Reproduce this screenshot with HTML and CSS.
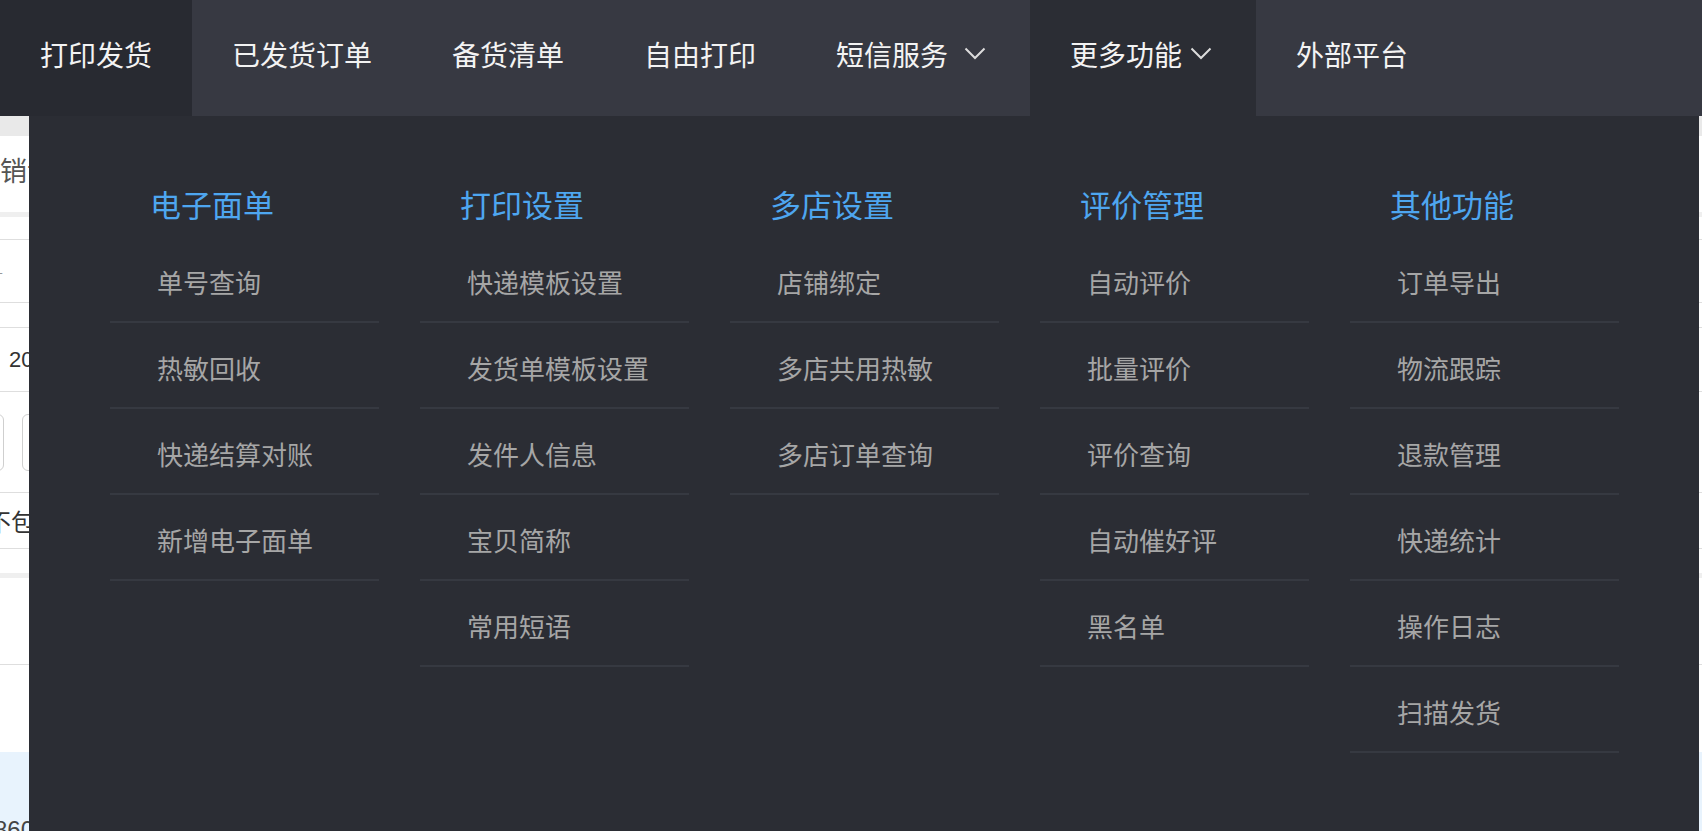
FILE: index.html
```html
<!DOCTYPE html>
<html lang="zh-CN">
<head>
<meta charset="utf-8">
<title>打印发货</title>
<link rel="stylesheet" href="styles.css">
</head>
<body>
<div class="app">
  <nav class="topnav">
    <a class="nav-item active">打印发货</a>
    <a class="nav-item">已发货订单</a>
    <a class="nav-item">备货清单</a>
    <a class="nav-item">自由打印</a>
    <a class="nav-item has-caret caret-wide">短信服务<svg class="caret" viewBox="0 0 22 13" width="22" height="13"><polyline points="1.5,1.5 11,11 20.5,1.5"/></svg></a>
    <a class="nav-item has-caret hover">更多功能<svg class="caret" viewBox="0 0 22 13" width="22" height="13"><polyline points="1.5,1.5 11,11 20.5,1.5"/></svg></a>
    <a class="nav-item">外部平台</a>
  </nav>

  <main class="page">
    <div class="band band-top"></div>
    <div class="row row-title"><span class="title-text">撤销订单</span></div>
    <div class="band band-thin"></div>
    <div class="row r23"></div>
    <div class="row r62"><span class="dash">-</span></div>
    <div class="row r24"></div>
    <div class="row r63"><span class="date">2017-06-01</span></div>
    <div class="row r100">
      <span class="box box-a"></span>
      <span class="box box-b"></span>
    </div>
    <div class="row r55"><span class="opt">不包邮</span></div>
    <div class="gap g24"></div>
    <div class="band band-thin"></div>
    <div class="row r86"></div>
    <div class="gap g87"></div>
    <div class="blue"><span class="num">860</span></div>
  </main>

  <div class="dropdown">
    <div class="menu-col">
      <h3 class="menu-head">电子面单</h3>
      <ul class="menu-list">
        <li>单号查询</li>
        <li>热敏回收</li>
        <li>快递结算对账</li>
        <li>新增电子面单</li>
      </ul>
    </div>
    <div class="menu-col">
      <h3 class="menu-head">打印设置</h3>
      <ul class="menu-list">
        <li>快递模板设置</li>
        <li>发货单模板设置</li>
        <li>发件人信息</li>
        <li>宝贝简称</li>
        <li>常用短语</li>
      </ul>
    </div>
    <div class="menu-col">
      <h3 class="menu-head">多店设置</h3>
      <ul class="menu-list">
        <li>店铺绑定</li>
        <li>多店共用热敏</li>
        <li>多店订单查询</li>
      </ul>
    </div>
    <div class="menu-col">
      <h3 class="menu-head">评价管理</h3>
      <ul class="menu-list">
        <li>自动评价</li>
        <li>批量评价</li>
        <li>评价查询</li>
        <li>自动催好评</li>
        <li>黑名单</li>
      </ul>
    </div>
    <div class="menu-col">
      <h3 class="menu-head">其他功能</h3>
      <ul class="menu-list">
        <li>订单导出</li>
        <li>物流跟踪</li>
        <li>退款管理</li>
        <li>快递统计</li>
        <li>操作日志</li>
        <li>扫描发货</li>
      </ul>
    </div>
  </div>
</div>
</body>
</html>
```

FILE: styles.css
```css
* { box-sizing: border-box; }
html, body {
  margin: 0;
  padding: 0;
  width: 1702px;
  height: 831px;
  overflow: hidden;
  background: #ffffff;
  font-family: "Noto Sans CJK SC", "Liberation Sans", sans-serif;
}
.app {
  position: relative;
  width: 1702px;
  height: 831px;
  overflow: hidden;
}

/* ---------- top nav ---------- */
.topnav {
  display: flex;
  height: 116px;
  background: #373942;
}
.nav-item {
  display: flex;
  align-items: center;
  padding: 0 40px 8px 40px;
  font-size: 28px;
  line-height: 1;
  color: #f3f3f3;
  white-space: nowrap;
}
.nav-item.active { background: #282a31; }
.nav-item.hover { background: #2b2d34; }
.nav-item.has-caret { padding-right: 44px; }
.caret {
  margin-left: 8px;
  margin-top: -2px;
  fill: none;
  stroke: #dcdcdc;
  stroke-width: 2;
}
.caret-wide .caret { margin-left: 16px; }

/* ---------- background page (under the menu) ---------- */
.page {
  display: flex;
  flex-direction: column;
  background: #ffffff;
  color: #444;
}
.band { background: #ececec; }
.band-top { height: 20px; background: #e9e9e9; }
.band-thin { height: 5px; background: #efefef; }
.row {
  display: flex;
  align-items: center;
  border-bottom: 1px solid #dedede;
  position: relative;
}
.row-title { height: 76px; border-bottom: none; padding-bottom: 10px; }
.title-text {
  font-size: 27px;
  color: #555;
  margin-left: -27px;
}
.r23 { height: 23px; }
.r62 { height: 63px; }
.dash { font-size: 14px; color: #999; margin-left: -2px; }
.r24 { height: 25px; }
.r63 { height: 64px; }
.date { font-size: 22px; color: #333; margin-left: 9px; font-family: "Liberation Sans", sans-serif; }
.r100 { height: 101px; gap: 18px; }
.box {
  display: block;
  height: 57px;
  border: 1px solid #cfcfcf;
  border-radius: 6px;
}
.box-a { width: 40px; margin-left: -36px; }
.box-b { width: 120px; }
.r55 { height: 56px; }
.opt { font-size: 24px; color: #333; margin-left: -13px; }
.g24 { height: 24px; }
.r86 { height: 87px; }
.g87 { height: 87px; }
.blue { background: #e8f3fd; height: 120px; padding-top: 64px; }
.num { font-size: 24px; color: #444; margin-left: -6px; font-family: "Liberation Sans", sans-serif; }

/* ---------- dropdown mega menu ---------- */
.dropdown {
  position: absolute;
  top: 116px;
  left: 29px;
  width: 1670px;
  height: 715px;
  background: #2b2d34;
  display: flex;
  gap: 41px;
  padding: 68px 81px 0 81px;
}
.menu-col {
  width: 269px;
  flex: 0 0 269px;
}
.menu-head {
  margin: 0 0 13px 0;
  padding-left: 40px;
  font-size: 31px;
  line-height: 40px;
  font-weight: normal;
  color: #4ea6f0;
}
.menu-list {
  list-style: none;
  margin: 0;
  padding: 0;
}
.menu-list li {
  padding: 26px 0 20px 47px;
  line-height: 38px;
  font-size: 26px;
  color: #a6a6a6;
  border-bottom: 2px solid #363941;
}
```
